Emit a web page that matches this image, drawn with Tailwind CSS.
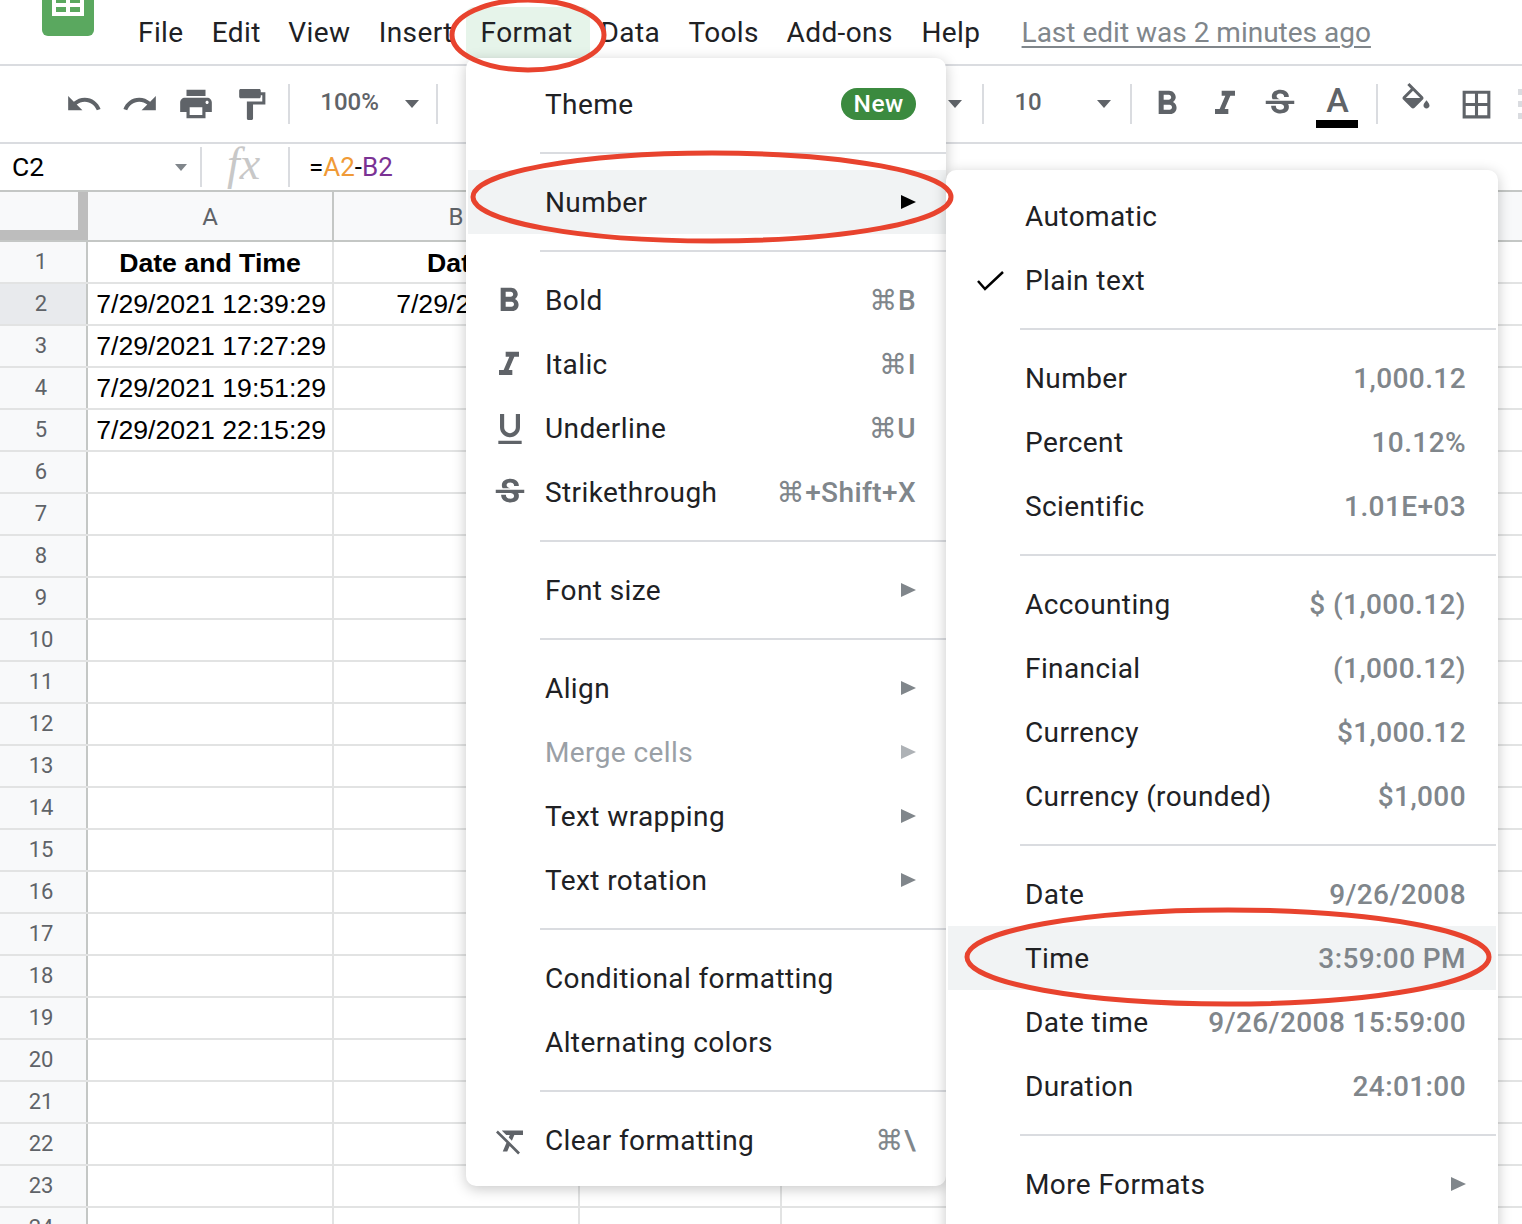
<!DOCTYPE html>
<html lang="en">
<head>
  <meta charset="UTF-8">
  <title>Format menu</title>
  <script src="https://cdn.jsdelivr.net/npm/@tailwindcss/browser@4"></script>
</head>
<body class="relative w-[1522px] h-[1224px] overflow-hidden bg-white font-['Roboto','DejaVu_Sans',sans-serif] text-[#202124]">

  <!-- Menu bar -->
  <header class="flex items-start h-[66px] border-b-2 border-[#dadce0]">
    <div class="w-[52px] h-[36px] ml-[42px] rounded-b-[6px] bg-[#5aa85f] flex justify-center">
      <svg class="w-[32px] h-[16px]" viewBox="0 0 32 16"><path fill="#fff" d="M0 0h32v16H0z"/><path fill="#5aa85f" d="M4 0h10v3H4zM18 0h10v3H18zM4 7h10v5H4zM18 7h10v5H18z"/></svg>
    </div>
    <nav class="flex items-center h-[64px] pt-[2px] ml-[44px] text-[28px] tracking-[0.4px]">
      <span>File</span>
      <span class="ml-[28.2px]">Edit</span>
      <span class="ml-[27.6px]">View</span>
      <span class="ml-[28.2px]">Insert</span>
      <span class="ml-[12.8px] h-[52px] w-[124px] pl-[15px] rounded-t-[8px] bg-[#e6f4ea] leading-[52px]">Format</span>
      <span class="ml-[11px]">Data</span>
      <span class="ml-[28.2px]">Tools</span>
      <span class="ml-[27.6px]">Add-ons</span>
      <span class="ml-[28.6px]">Help</span>
      <span class="ml-[41.2px] tracking-normal text-[#80868b] underline underline-offset-[4px]">Last edit was 2 minutes ago</span>
    </nav>
  </header>

  <!-- Toolbar -->
  <div class="flex items-center h-[78px] pl-[56px] border-b-2 border-[#dadce0] text-[#5f6368]">
    <div class="w-14 flex justify-center"><svg class="w-[38px] h-[38px] fill-[#5f6368]" viewBox="0 0 24 24"><path d="M12.5 8c-2.65 0-5.05.99-6.9 2.6L2 7v9h9l-3.62-3.62c1.39-1.16 3.16-1.88 5.12-1.88 3.54 0 6.55 2.31 7.6 5.5l2.37-.78C21.08 11.03 17.15 8 12.5 8z"/></svg></div>
    <div class="w-14 flex justify-center"><svg class="w-[38px] h-[38px] fill-[#5f6368]" viewBox="0 0 24 24"><path d="M18.4 10.6C16.55 8.99 14.15 8 11.5 8c-4.65 0-8.58 3.03-9.96 7.22L3.9 16c1.05-3.19 4.05-5.5 7.6-5.5 1.95 0 3.73.72 5.12 1.88L13 16h9V7l-3.6 3.6z"/></svg></div>
    <div class="w-14 flex justify-center"><svg class="w-[38px] h-[38px] fill-[#5f6368]" viewBox="0 0 24 24"><path d="M19 8H5c-1.66 0-3 1.34-3 3v6h4v4h12v-4h4v-6c0-1.66-1.34-3-3-3zm-3 11H8v-5h8v5zm3-7c-.55 0-1-.45-1-1s.45-1 1-1 1 .45 1 1-.45 1-1 1zm-1-9H6v4h12V3z"/></svg></div>
    <div class="w-14 flex justify-center"><svg class="w-[37px] h-[37px] fill-[#5f6368]" viewBox="0 0 24 24"><path d="M18 4V3c0-.55-.45-1-1-1H5c-.55 0-1 .45-1 1v4c0 .55.45 1 1 1h12c.55 0 1-.45 1-1V6h1v4H9v11c0 .55.45 1 1 1h2c.55 0 1-.45 1-1v-9h8V4h-3z"/></svg></div>
    <div class="w-[2px] h-[40px] ml-[9px] bg-[#dadce0]"></div>
    <div class="flex items-center w-[146px] pl-[30px] text-[24px] font-medium">
      <span class="w-[85px] -mt-[4px]">100%</span>
      <svg class="w-[14px] h-[8px] fill-[#5f6368]" viewBox="0 0 14 8"><path d="M0 0h14L7 8z"/></svg>
    </div>
    <div class="w-[2px] h-[40px] bg-[#dadce0]"></div>
    <div class="w-[546px] flex justify-end pr-[20px]">
      <svg class="w-[14px] h-[8px] fill-[#5f6368]" viewBox="0 0 14 8"><path d="M0 0h14L7 8z"/></svg>
    </div>
    <div class="w-[2px] h-[40px] bg-[#dadce0]"></div>
    <div class="flex items-center w-[146px] pl-[30px] text-[24px] font-medium">
      <span class="w-[83px] -mt-[4px]">10</span>
      <svg class="w-[14px] h-[8px] fill-[#5f6368]" viewBox="0 0 14 8"><path d="M0 0h14L7 8z"/></svg>
    </div>
    <div class="w-[2px] h-[40px] bg-[#dadce0]"></div>
    <div class="w-14 ml-[7px] flex justify-center"><svg class="w-[40px] h-[40px] fill-[#5f6368]" viewBox="0 0 24 24"><path d="M15.6 10.79c.97-.67 1.65-1.77 1.65-2.79 0-2.26-1.75-4-4-4H7v14h7.04c2.09 0 3.71-1.7 3.71-3.79 0-1.52-.86-2.82-2.15-3.42zM10 6.5h3c.83 0 1.5.67 1.5 1.5s-.67 1.5-1.5 1.5h-3v-3zm3.5 9H10v-3h3.5c.83 0 1.5.67 1.5 1.5s-.67 1.5-1.5 1.5z"/></svg></div>
    <div class="w-14 ml-[2px] flex justify-center"><svg class="w-[40px] h-[40px] fill-[#5f6368]" viewBox="0 0 24 24"><path d="M10 4v3h2.21l-3.42 8H6v3h8v-3h-2.21l3.42-8H18V4z"/></svg></div>
    <div class="w-14 -ml-[1px] flex justify-center"><svg class="w-[38px] h-[38px] fill-[#5f6368]" viewBox="0 0 24 24"><path d="M6.85 7.08C6.85 4.37 9.45 3 12.24 3c1.64 0 3 .49 3.9 1.28.77.65 1.46 1.73 1.46 3.24h-3.01c0-.31-.05-.59-.15-.85-.29-.86-1.2-1.28-2.25-1.28-1.86 0-2.34 1.02-2.34 1.7 0 .48.25.88.74 1.21.38.25.77.48 1.41.7H7.39c-.21-.34-.54-.89-.54-1.92zM21 12v-2H3v2h9.62c1.15.45 1.96.75 1.96 1.97 0 1-.81 1.67-2.28 1.67-1.54 0-2.93-.54-2.93-2.51H6.4c0 .55.08 1.13.24 1.58.81 2.29 3.29 3.3 5.67 3.3 2.27 0 5.3-.89 5.3-4.05 0-.3-.01-1.16-.48-1.94H21V12z"/></svg></div>
    <div class="w-14 ml-[2px] flex flex-col items-center mt-[4px]">
      <span class="h-[32px] leading-[32px] text-[34px] font-medium">A</span>
      <div class="w-[42px] h-[8px] mt-[4px] bg-black"></div>
    </div>
    <div class="w-[2px] h-[40px] ml-[11px] bg-[#dadce0]"></div>
    <div class="w-14 ml-[10px] flex justify-center"><svg class="w-[36px] h-[36px] fill-[#5f6368] -mt-[6px]" viewBox="0 0 24 24"><path d="M16.56 8.94L7.62 0 6.21 1.41l2.38 2.38-5.15 5.15c-.59.59-.59 1.54 0 2.12l5.5 5.5c.29.29.68.44 1.06.44s.77-.15 1.06-.44l5.5-5.5c.59-.58.59-1.53 0-2.12zM5.21 10L10 5.21 14.79 10H5.21z"/><path d="M5 10h10l-5 5.5zM19 11.5s-2 2.17-2 3.5c0 1.1.9 2 2 2s2-.9 2-2c0-1.33-2-3.5-2-3.5z"/></svg></div>
    <div class="w-14 ml-[4px] flex justify-center"><svg class="w-[37px] h-[37px] fill-[#5f6368]" viewBox="0 0 24 24"><path d="M3 3v18h18V3H3zm8 16H5v-6h6v6zm0-8H5V5h6v6zm8 8h-6v-6h6v6zm0-8h-6V5h6v6z"/></svg></div>
    <div class="ml-[14px] flex flex-col gap-[6px]">
      <div class="w-[4px] h-[6px] bg-[#dadce0]"></div>
      <div class="w-[4px] h-[6px] bg-[#dadce0]"></div>
      <div class="w-[4px] h-[6px] bg-[#dadce0]"></div>
    </div>
  </div>

  <!-- Formula bar -->
  <div class="flex items-center h-[48px] border-b-2 border-[#c4c7c5]">
    <span class="w-[175px] pl-[12px] text-[26.5px] text-black">C2</span>
    <svg class="w-[12px] h-[7px] fill-[#80868b]" viewBox="0 0 12 7"><path d="M0 0h12L6 7z"/></svg>
    <div class="w-[2px] h-[40px] ml-[13px] bg-[#dadce0]"></div>
    <span class="w-[86px] pl-[25px] font-['Liberation_Serif',serif] italic text-[46px] leading-none -mt-[6px] text-[#c8c8c8]">fx</span>
    <div class="w-[2px] h-[40px] bg-[#dadce0]"></div>
    <span class="ml-[19px] text-[26px] text-black">=<span class="text-[#f09a37]">A2</span>-<span class="text-[#7b3294]">B2</span></span>
  </div>

  <!-- Column headers -->
  <div class="flex h-[50px] bg-[#f8f9fa] border-b-2 border-[#c4c7c5] text-[24px] text-[#5f6368]">
    <div class="w-[88px] h-[48px] border-r-[10px] border-b-[10px] border-[#bdbdbd]"></div>
    <div class="w-[246px] flex items-center justify-center pt-[2px] border-r-2 border-[#c4c7c5]">A</div>
    <div class="w-[246px] flex items-center justify-center pt-[2px] border-r-2 border-[#dadce0]">B</div>
    <div class="w-[202px] border-r-2 border-[#dadce0]"></div>
  </div>

  <!-- Sheet rows -->
  <div id="rows" class="font-['Liberation_Sans',Arial,sans-serif] text-[26.67px] text-black">
    <div class="flex h-[42px] border-b-2 border-[#e2e3e3]">
      <div class="w-[88px] flex items-center justify-center pr-[4px] pb-[2px] bg-[#f8f9fa] border-r-2 border-[#c4c7c5] font-['Roboto',sans-serif] text-[22px] text-[#5f6368]">1</div>
      <div class="w-[246px] flex items-center justify-center pt-[2px] border-r-2 border-[#e2e3e3] font-bold">Date and Time</div>
      <div class="w-[246px] flex items-center justify-center pt-[2px] border-r-2 border-[#e2e3e3] font-bold">Date</div>
      <div class="w-[202px] border-r-2 border-[#e2e3e3]"></div>
    </div>
    <div class="flex h-[42px] border-b-2 border-[#e2e3e3]">
      <div class="w-[88px] flex items-center justify-center pr-[4px] pb-[2px] bg-[#e8eaed] border-r-2 border-[#c4c7c5] font-['Roboto',sans-serif] text-[22px] text-[#5f6368]">2</div>
      <div class="w-[246px] flex items-center justify-end pr-[6px] border-r-2 border-[#e2e3e3]">7/29/2021 12:39:29</div>
      <div class="w-[246px] flex items-center justify-end pr-[4px] border-r-2 border-[#e2e3e3]">7/29/2021 8:00</div>
      <div class="w-[202px] border-r-2 border-[#e2e3e3]"></div>
    </div>
    <div class="flex h-[42px] border-b-2 border-[#e2e3e3]">
      <div class="w-[88px] flex items-center justify-center pr-[4px] pb-[2px] bg-[#f8f9fa] border-r-2 border-[#c4c7c5] font-['Roboto',sans-serif] text-[22px] text-[#5f6368]">3</div>
      <div class="w-[246px] flex items-center justify-end pr-[6px] border-r-2 border-[#e2e3e3]">7/29/2021 17:27:29</div>
      <div class="w-[246px] border-r-2 border-[#e2e3e3]"></div>
      <div class="w-[202px] border-r-2 border-[#e2e3e3]"></div>
    </div>
    <div class="flex h-[42px] border-b-2 border-[#e2e3e3]">
      <div class="w-[88px] flex items-center justify-center pr-[4px] pb-[2px] bg-[#f8f9fa] border-r-2 border-[#c4c7c5] font-['Roboto',sans-serif] text-[22px] text-[#5f6368]">4</div>
      <div class="w-[246px] flex items-center justify-end pr-[6px] border-r-2 border-[#e2e3e3]">7/29/2021 19:51:29</div>
      <div class="w-[246px] border-r-2 border-[#e2e3e3]"></div>
      <div class="w-[202px] border-r-2 border-[#e2e3e3]"></div>
    </div>
    <div class="flex h-[42px] border-b-2 border-[#e2e3e3]">
      <div class="w-[88px] flex items-center justify-center pr-[4px] pb-[2px] bg-[#f8f9fa] border-r-2 border-[#c4c7c5] font-['Roboto',sans-serif] text-[22px] text-[#5f6368]">5</div>
      <div class="w-[246px] flex items-center justify-end pr-[6px] border-r-2 border-[#e2e3e3]">7/29/2021 22:15:29</div>
      <div class="w-[246px] border-r-2 border-[#e2e3e3]"></div>
      <div class="w-[202px] border-r-2 border-[#e2e3e3]"></div>
    </div>
  </div>

  <!-- Format menu -->
  <div class="absolute left-[466px] top-[58px] w-[480px] h-[1128px] pl-[2px] py-[14px] bg-white rounded-[10px] shadow-[0_3px_14px_rgba(0,0,0,0.22)] text-[28px] tracking-[0.4px]">
    <div class="flex items-center h-16 pt-[2px] pl-[77px] pr-[30px]">
      <span class="flex-1">Theme</span>
      <span class="flex items-center h-[32px] px-[12.5px] -mt-[2px] rounded-full bg-[#3b8a3f] text-white text-[24.5px] font-medium">New</span>
    </div>
    <div class="flex items-center h-[34px] pl-[72px]"><div class="w-full h-[2px] bg-[#dadce0]"></div></div>
    <div class="flex items-center h-16 pt-[2px] pl-[77px] pr-[30px] bg-[#f1f3f4]">
      <span class="flex-1">Number</span>
      <svg class="w-[15px] h-[14px] -mt-[2px] fill-black" viewBox="0 0 15 14"><path d="M0 0l15 7-15 7z"/></svg>
    </div>
    <div class="flex items-center h-[34px] pl-[72px]"><div class="w-full h-[2px] bg-[#dadce0]"></div></div>
    <div class="flex items-center h-16 pt-[2px] pl-[21px] pr-[30px]">
      <svg class="w-[40px] h-[40px] mr-[16px] fill-[#5f6368]" viewBox="0 0 24 24"><path d="M15.6 10.79c.97-.67 1.65-1.77 1.65-2.79 0-2.26-1.75-4-4-4H7v14h7.04c2.09 0 3.71-1.7 3.71-3.79 0-1.52-.86-2.82-2.15-3.42zM10 6.5h3c.83 0 1.5.67 1.5 1.5s-.67 1.5-1.5 1.5h-3v-3zm3.5 9H10v-3h3.5c.83 0 1.5.67 1.5 1.5s-.67 1.5-1.5 1.5z"/></svg>
      <span class="flex-1">Bold</span><span class="text-[#80868b] font-medium">⌘B</span>
    </div>
    <div class="flex items-center h-16 pt-[2px] pl-[21px] pr-[30px]">
      <svg class="w-[40px] h-[40px] mr-[16px] fill-[#5f6368]" viewBox="0 0 24 24"><path d="M10 4v3h2.21l-3.42 8H6v3h8v-3h-2.21l3.42-8H18V4z"/></svg>
      <span class="flex-1">Italic</span><span class="text-[#80868b] font-medium">⌘I</span>
    </div>
    <div class="flex items-center h-16 pt-[2px] pl-[22px] pr-[30px]">
      <svg class="w-[40px] h-[40px] mr-[15px] fill-[#5f6368]" viewBox="0 0 24 24"><path d="M12 17c3.31 0 6-2.69 6-6V3h-2.5v8c0 1.93-1.57 3.5-3.5 3.5S8.5 12.93 8.5 11V3H6v8c0 3.31 2.69 6 6 6zm-7 2v2h14v-2H5z"/></svg>
      <span class="flex-1">Underline</span><span class="text-[#80868b] font-medium">⌘U</span>
    </div>
    <div class="flex items-center h-16 pt-[2px] pl-[23px] pr-[30px]">
      <svg class="w-[38px] h-[38px] mr-[16px] fill-[#5f6368]" viewBox="0 0 24 24"><path d="M6.85 7.08C6.85 4.37 9.45 3 12.24 3c1.64 0 3 .49 3.9 1.28.77.65 1.46 1.73 1.46 3.24h-3.01c0-.31-.05-.59-.15-.85-.29-.86-1.2-1.28-2.25-1.28-1.86 0-2.34 1.02-2.34 1.7 0 .48.25.88.74 1.21.38.25.77.48 1.41.7H7.39c-.21-.34-.54-.89-.54-1.92zM21 12v-2H3v2h9.62c1.15.45 1.96.75 1.96 1.97 0 1-.81 1.67-2.28 1.67-1.54 0-2.93-.54-2.93-2.51H6.4c0 .55.08 1.13.24 1.58.81 2.29 3.29 3.3 5.67 3.3 2.27 0 5.3-.89 5.3-4.05 0-.3-.01-1.16-.48-1.94H21V12z"/></svg>
      <span class="flex-1">Strikethrough</span><span class="text-[#80868b] font-medium">⌘+Shift+X</span>
    </div>
    <div class="flex items-center h-[34px] pl-[72px]"><div class="w-full h-[2px] bg-[#dadce0]"></div></div>
    <div class="flex items-center h-16 pt-[2px] pl-[77px] pr-[30px]">
      <span class="flex-1">Font size</span>
      <svg class="w-[15px] h-[14px] -mt-[2px] fill-[#80868b]" viewBox="0 0 15 14"><path d="M0 0l15 7-15 7z"/></svg>
    </div>
    <div class="flex items-center h-[34px] pl-[72px]"><div class="w-full h-[2px] bg-[#dadce0]"></div></div>
    <div class="flex items-center h-16 pt-[2px] pl-[77px] pr-[30px]">
      <span class="flex-1">Align</span>
      <svg class="w-[15px] h-[14px] -mt-[2px] fill-[#80868b]" viewBox="0 0 15 14"><path d="M0 0l15 7-15 7z"/></svg>
    </div>
    <div class="flex items-center h-16 pt-[2px] pl-[77px] pr-[30px]">
      <span class="flex-1 text-[#9aa0a6]">Merge cells</span>
      <svg class="w-[15px] h-[14px] -mt-[2px] fill-[#aeb2b6]" viewBox="0 0 15 14"><path d="M0 0l15 7-15 7z"/></svg>
    </div>
    <div class="flex items-center h-16 pt-[2px] pl-[77px] pr-[30px]">
      <span class="flex-1">Text wrapping</span>
      <svg class="w-[15px] h-[14px] -mt-[2px] fill-[#80868b]" viewBox="0 0 15 14"><path d="M0 0l15 7-15 7z"/></svg>
    </div>
    <div class="flex items-center h-16 pt-[2px] pl-[77px] pr-[30px]">
      <span class="flex-1">Text rotation</span>
      <svg class="w-[15px] h-[14px] -mt-[2px] fill-[#80868b]" viewBox="0 0 15 14"><path d="M0 0l15 7-15 7z"/></svg>
    </div>
    <div class="flex items-center h-[34px] pl-[72px]"><div class="w-full h-[2px] bg-[#dadce0]"></div></div>
    <div class="flex items-center h-16 pt-[2px] pl-[77px] pr-[30px]">Conditional formatting</div>
    <div class="flex items-center h-16 pt-[2px] pl-[77px] pr-[30px]">Alternating colors</div>
    <div class="flex items-center h-[34px] pl-[72px]"><div class="w-full h-[2px] bg-[#dadce0]"></div></div>
    <div class="flex items-center h-16 pt-[2px] pl-[25px] pr-[30px]">
      <svg class="w-[36px] h-[36px] mr-[16px] fill-[#5f6368]" viewBox="0 0 24 24"><path d="M3.27 5L2 6.27l6.97 6.97L6.5 19h3l1.57-3.66L16.73 21 18 19.73 3.55 5.27 3.27 5zM6 5v.18L8.82 8h2.4l-.72 1.68 2.1 2.1L14.21 8H20V5H6z"/></svg>
      <span class="flex-1">Clear formatting</span><span class="text-[#80868b] font-medium">⌘\</span>
    </div>
  </div>

  <!-- Number submenu -->
  <div class="absolute left-[946px] top-[170px] w-[552px] h-[1070px] px-[2px] py-[14px] bg-white rounded-[10px] shadow-[0_3px_14px_rgba(0,0,0,0.22)] text-[28px] tracking-[0.4px]">
    <div class="flex items-center h-16 pt-[2px] pl-[77px] pr-[30px]">Automatic</div>
    <div class="flex items-center h-16 pt-[2px] pl-[22px] pr-[30px]">
      <svg class="w-[40px] h-[40px] mr-[15px] fill-none stroke-black stroke-[2.5]" viewBox="0 0 40 40"><path d="M8 20l7 8L33 11"/></svg>
      <span>Plain text</span>
    </div>
    <div class="flex items-center h-[34px] pl-[72px]"><div class="w-full h-[2px] bg-[#dadce0]"></div></div>
    <div class="flex items-center justify-between h-16 pt-[2px] pl-[77px] pr-[30px]"><span>Number</span><span class="text-[#80868b] font-medium">1,000.12</span></div>
    <div class="flex items-center justify-between h-16 pt-[2px] pl-[77px] pr-[30px]"><span>Percent</span><span class="text-[#80868b] font-medium">10.12%</span></div>
    <div class="flex items-center justify-between h-16 pt-[2px] pl-[77px] pr-[30px]"><span>Scientific</span><span class="text-[#80868b] font-medium">1.01E+03</span></div>
    <div class="flex items-center h-[34px] pl-[72px]"><div class="w-full h-[2px] bg-[#dadce0]"></div></div>
    <div class="flex items-center justify-between h-16 pt-[2px] pl-[77px] pr-[30px]"><span>Accounting</span><span class="text-[#80868b] font-medium">$ (1,000.12)</span></div>
    <div class="flex items-center justify-between h-16 pt-[2px] pl-[77px] pr-[30px]"><span>Financial</span><span class="text-[#80868b] font-medium">(1,000.12)</span></div>
    <div class="flex items-center justify-between h-16 pt-[2px] pl-[77px] pr-[30px]"><span>Currency</span><span class="text-[#80868b] font-medium">$1,000.12</span></div>
    <div class="flex items-center justify-between h-16 pt-[2px] pl-[77px] pr-[30px]"><span>Currency (rounded)</span><span class="text-[#80868b] font-medium">$1,000</span></div>
    <div class="flex items-center h-[34px] pl-[72px]"><div class="w-full h-[2px] bg-[#dadce0]"></div></div>
    <div class="flex items-center justify-between h-16 pt-[2px] pl-[77px] pr-[30px]"><span>Date</span><span class="text-[#80868b] font-medium">9/26/2008</span></div>
    <div class="flex items-center justify-between h-16 pt-[2px] pl-[77px] pr-[30px] bg-[#f1f3f4]"><span>Time</span><span class="text-[#80868b] font-medium">3:59:00 PM</span></div>
    <div class="flex items-center justify-between h-16 pt-[2px] pl-[77px] pr-[30px]"><span>Date time</span><span class="text-[#80868b] font-medium">9/26/2008 15:59:00</span></div>
    <div class="flex items-center justify-between h-16 pt-[2px] pl-[77px] pr-[30px]"><span>Duration</span><span class="text-[#80868b] font-medium">24:01:00</span></div>
    <div class="flex items-center h-[34px] pl-[72px]"><div class="w-full h-[2px] bg-[#dadce0]"></div></div>
    <div class="flex items-center justify-between h-16 pt-[2px] pl-[77px] pr-[30px]">
      <span>More Formats</span>
      <svg class="w-[15px] h-[14px] -mt-[2px] fill-[#80868b]" viewBox="0 0 15 14"><path d="M0 0l15 7-15 7z"/></svg>
    </div>
  </div>

  <!-- Red annotation ellipses -->
  <svg class="absolute left-0 top-0 w-[1522px] h-[1224px] pointer-events-none" viewBox="0 0 1522 1224" fill="none" stroke="#e8432e" stroke-width="5">
    <ellipse cx="528" cy="35" rx="76" ry="35"/>
    <ellipse cx="712" cy="197" rx="239" ry="44"/>
    <ellipse cx="1228" cy="957" rx="261" ry="47"/>
  </svg>

  <script>
    // Empty rows 6 to 24
    const rows = document.getElementById('rows');
    for (let n = 6; n <= 24; n++) {
      rows.insertAdjacentHTML('beforeend', `
        <div class="flex h-[42px] border-b-2 border-[#e2e3e3]">
          <div class="w-[88px] flex items-center justify-center pr-[4px] pb-[2px] bg-[#f8f9fa] border-r-2 border-[#c4c7c5] font-['Roboto',sans-serif] text-[22px] text-[#5f6368]">${n}</div>
          <div class="w-[246px] border-r-2 border-[#e2e3e3]"></div>
          <div class="w-[246px] border-r-2 border-[#e2e3e3]"></div>
          <div class="w-[202px] border-r-2 border-[#e2e3e3]"></div>
        </div>`);
    }
  </script>
</body>
</html>
